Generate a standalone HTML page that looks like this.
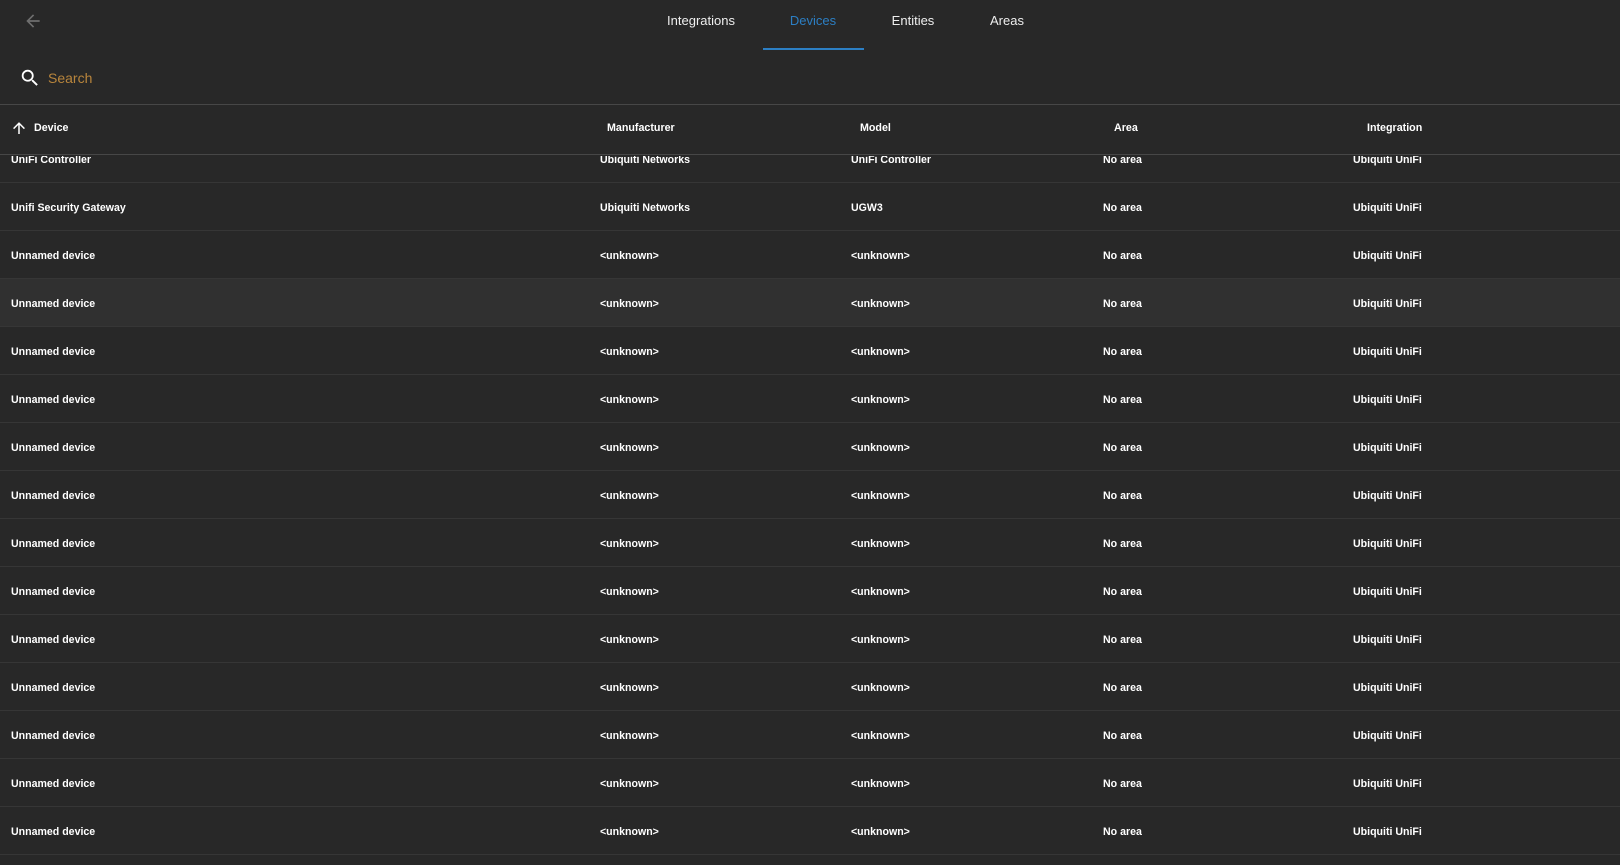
<!DOCTYPE html>
<html><head><meta charset="utf-8"><style>
*{margin:0;padding:0;box-sizing:border-box}
body{width:1620px;height:865px;background:#282828;font-family:"Liberation Sans",sans-serif;color:#fff;overflow:hidden;position:relative}
.tab{position:absolute;top:13px;font-size:13px;color:#eee;transform:translateX(-50%);white-space:nowrap}
.a{position:absolute;white-space:nowrap}
.hdr{position:absolute;top:104px;left:0;width:1620px;height:51px;border-top:1px solid #474747;border-bottom:1px solid #474747}
.h{position:absolute;top:17px;font-size:10.7px;font-weight:bold}
.body{position:absolute;top:156px;left:0;width:1620px;height:709px;overflow:hidden}
.row{position:absolute;left:0;width:1620px;height:48px;border-bottom:1px solid #363636;font-size:10.6px;font-weight:bold}
.row span{position:absolute;top:19px;white-space:nowrap}
.hov{background:#303030}
</style></head><body>
<svg class="a" style="left:23px;top:11px" width="20" height="20" viewBox="0 0 24 24"><path d="M20 11H7.8l5.6-5.6L12 4l-8 8 8 8 1.4-1.4L7.8 13H20z" fill="#6e6e6e"/></svg>
<div class="tab" style="left:701px">Integrations</div>
<div class="tab" style="left:813px;color:#2c7fc4">Devices</div>
<div class="tab" style="left:913px">Entities</div>
<div class="tab" style="left:1007px">Areas</div>
<div class="a" style="left:763px;top:48px;width:101px;height:2px;background:#2c7fc4"></div>
<svg class="a" style="left:19px;top:67px" width="22" height="22" viewBox="0 0 24 24"><path d="M9.5 3A6.5 6.5 0 0 1 16 9.5c0 1.6-.6 3.1-1.6 4.2l.3.3h.8l5 5-1.5 1.5-5-5v-.8l-.3-.3A6.5 6.5 0 0 1 9.5 16 6.5 6.5 0 0 1 3 9.5 6.5 6.5 0 0 1 9.5 3m0 2C7 5 5 7 5 9.5S7 14 9.5 14 14 12 14 9.5 12 5 9.5 5z" fill="#fff"/></svg>
<div class="a" style="left:48px;top:70px;font-size:14px;color:#b8853c">Search</div>
<div class="hdr">
<svg class="a" style="left:10px;top:14px" width="18" height="18" viewBox="0 0 24 24"><path d="M13 20h-2V8l-5.5 5.5-1.4-1.4L12 4.2l7.9 7.9-1.4 1.4L13 8v12z" fill="#fff"/></svg>
<div class="h" style="left:34px">Device</div>
<div class="h" style="left:607px">Manufacturer</div>
<div class="h" style="left:860px">Model</div>
<div class="h" style="left:1114px">Area</div>
<div class="h" style="left:1367px">Integration</div>
</div>
<div class="body">
<div class="row" style="top:-21px"><span style="left:11px">UniFi Controller</span><span style="left:600px">Ubiquiti Networks</span><span style="left:851px">UniFi Controller</span><span style="left:1103px">No area</span><span style="left:1353px">Ubiquiti UniFi</span></div>
<div class="row" style="top:27px"><span style="left:11px">Unifi Security Gateway</span><span style="left:600px">Ubiquiti Networks</span><span style="left:851px">UGW3</span><span style="left:1103px">No area</span><span style="left:1353px">Ubiquiti UniFi</span></div>
<div class="row" style="top:75px"><span style="left:11px">Unnamed device</span><span style="left:600px">&lt;unknown&gt;</span><span style="left:851px">&lt;unknown&gt;</span><span style="left:1103px">No area</span><span style="left:1353px">Ubiquiti UniFi</span></div>
<div class="row hov" style="top:123px"><span style="left:11px">Unnamed device</span><span style="left:600px">&lt;unknown&gt;</span><span style="left:851px">&lt;unknown&gt;</span><span style="left:1103px">No area</span><span style="left:1353px">Ubiquiti UniFi</span></div>
<div class="row" style="top:171px"><span style="left:11px">Unnamed device</span><span style="left:600px">&lt;unknown&gt;</span><span style="left:851px">&lt;unknown&gt;</span><span style="left:1103px">No area</span><span style="left:1353px">Ubiquiti UniFi</span></div>
<div class="row" style="top:219px"><span style="left:11px">Unnamed device</span><span style="left:600px">&lt;unknown&gt;</span><span style="left:851px">&lt;unknown&gt;</span><span style="left:1103px">No area</span><span style="left:1353px">Ubiquiti UniFi</span></div>
<div class="row" style="top:267px"><span style="left:11px">Unnamed device</span><span style="left:600px">&lt;unknown&gt;</span><span style="left:851px">&lt;unknown&gt;</span><span style="left:1103px">No area</span><span style="left:1353px">Ubiquiti UniFi</span></div>
<div class="row" style="top:315px"><span style="left:11px">Unnamed device</span><span style="left:600px">&lt;unknown&gt;</span><span style="left:851px">&lt;unknown&gt;</span><span style="left:1103px">No area</span><span style="left:1353px">Ubiquiti UniFi</span></div>
<div class="row" style="top:363px"><span style="left:11px">Unnamed device</span><span style="left:600px">&lt;unknown&gt;</span><span style="left:851px">&lt;unknown&gt;</span><span style="left:1103px">No area</span><span style="left:1353px">Ubiquiti UniFi</span></div>
<div class="row" style="top:411px"><span style="left:11px">Unnamed device</span><span style="left:600px">&lt;unknown&gt;</span><span style="left:851px">&lt;unknown&gt;</span><span style="left:1103px">No area</span><span style="left:1353px">Ubiquiti UniFi</span></div>
<div class="row" style="top:459px"><span style="left:11px">Unnamed device</span><span style="left:600px">&lt;unknown&gt;</span><span style="left:851px">&lt;unknown&gt;</span><span style="left:1103px">No area</span><span style="left:1353px">Ubiquiti UniFi</span></div>
<div class="row" style="top:507px"><span style="left:11px">Unnamed device</span><span style="left:600px">&lt;unknown&gt;</span><span style="left:851px">&lt;unknown&gt;</span><span style="left:1103px">No area</span><span style="left:1353px">Ubiquiti UniFi</span></div>
<div class="row" style="top:555px"><span style="left:11px">Unnamed device</span><span style="left:600px">&lt;unknown&gt;</span><span style="left:851px">&lt;unknown&gt;</span><span style="left:1103px">No area</span><span style="left:1353px">Ubiquiti UniFi</span></div>
<div class="row" style="top:603px"><span style="left:11px">Unnamed device</span><span style="left:600px">&lt;unknown&gt;</span><span style="left:851px">&lt;unknown&gt;</span><span style="left:1103px">No area</span><span style="left:1353px">Ubiquiti UniFi</span></div>
<div class="row" style="top:651px"><span style="left:11px">Unnamed device</span><span style="left:600px">&lt;unknown&gt;</span><span style="left:851px">&lt;unknown&gt;</span><span style="left:1103px">No area</span><span style="left:1353px">Ubiquiti UniFi</span></div>
<div class="row" style="top:699px"><span style="left:11px">Unnamed device</span><span style="left:600px">&lt;unknown&gt;</span><span style="left:851px">&lt;unknown&gt;</span><span style="left:1103px">No area</span><span style="left:1353px">Ubiquiti UniFi</span></div>
</div>
</body></html>
